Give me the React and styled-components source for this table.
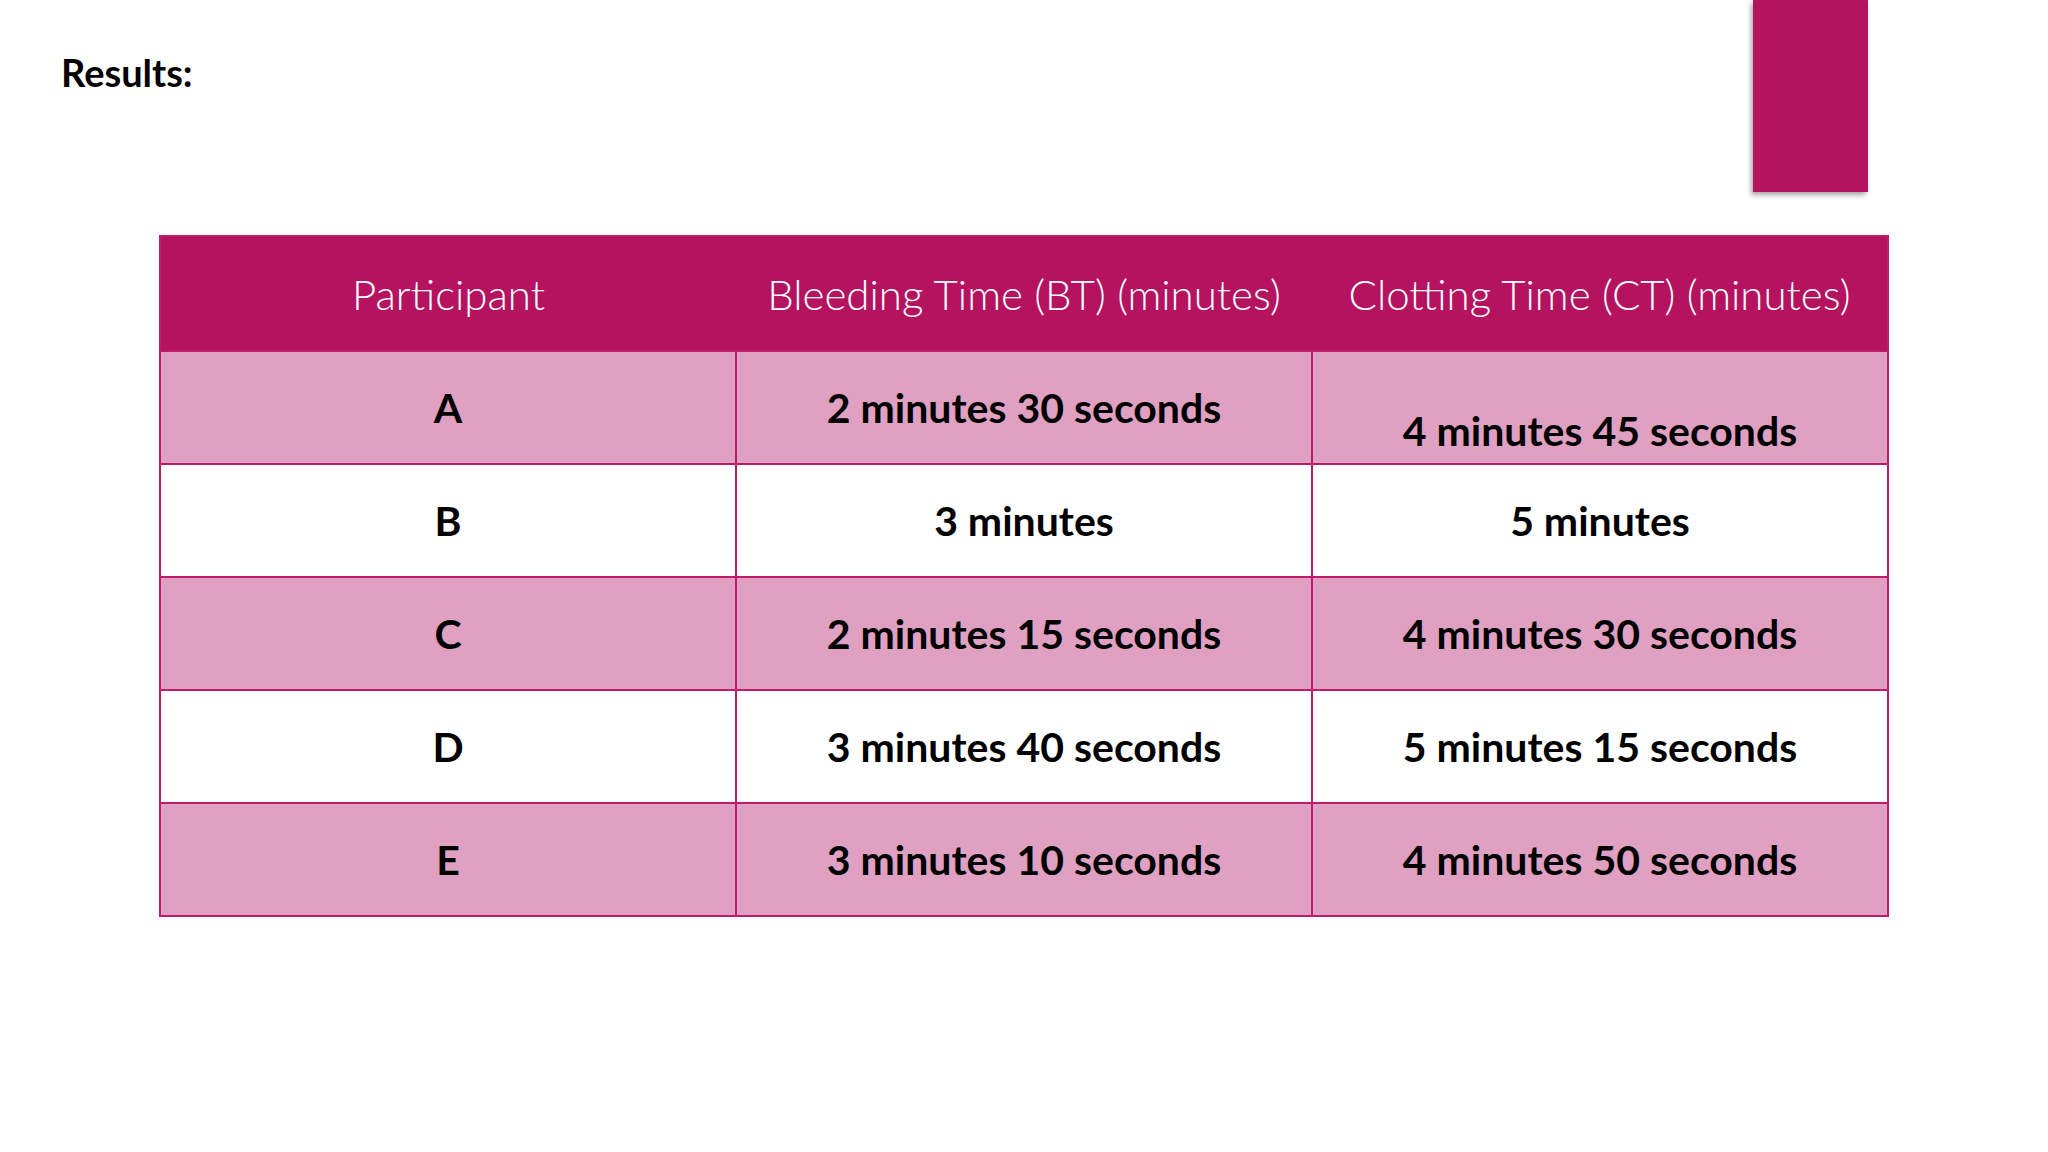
import React from "react";
import styled, { createGlobalStyle } from "styled-components";

const Global = createGlobalStyle`
  html, body { margin: 0; padding: 0; background: #ffffff; }
  body { font-family: "Lato", "Liberation Sans", sans-serif; }
`;

const Slide = styled.div`
  width: 2048px;
  height: 1152px;
  background: #ffffff;
  display: flex;
  flex-direction: column;
  overflow: hidden;
`;

const TopBar = styled.div`
  display: flex;
  justify-content: space-between;
  align-items: flex-start;
  height: 192px;
  padding: 0 180px 0 61px;
`;

const Title = styled.h1`
  margin: 51px 0 0 0;
  font-family: "Lato", "Liberation Sans", sans-serif;
  font-weight: 700;
  font-size: 38px;
  line-height: 42px;
  color: #000;
`;

const Accent = styled.div`
  width: 115px;
  height: 192px;
  background: #b3135f;
  box-shadow: -2px 3px 5px rgba(0, 0, 0, 0.35);
`;

const Table = styled.table`
  margin: 43px 0 0 159px;
  width: 1730px;
  border-collapse: collapse;
  table-layout: fixed;
  border: 2px solid #bf1a6c;
`;

const HeadCell = styled.th`
  height: 113px;
  padding: 0;
  background: #b5135f;
  color: #ffffff;
  font-family: "Lato", "Liberation Sans", sans-serif;
  font-weight: 300;
  font-size: 42px;
  text-align: center;
  vertical-align: middle;
`;

const Row = styled.tr`
  background: ${(p) => (p.$shaded ? "#dfa0c1" : "#ffffff")};
`;

const Cell = styled.td`
  height: 113px;
  box-sizing: border-box;
  padding: ${(p) => (p.$low ? "46px 0 0 0" : "0")};
  border: 2px solid #bf1a6c;
  color: #000;
  font-family: "Lato", "Liberation Sans", sans-serif;
  font-weight: 700;
  font-size: 41px;
  text-align: center;
  vertical-align: middle;
`;

const rows = [
  ["A", "2 minutes 30 seconds", "4 minutes 45 seconds"],
  ["B", "3 minutes", "5 minutes"],
  ["C", "2 minutes 15 seconds", "4 minutes 30 seconds"],
  ["D", "3 minutes 40 seconds", "5 minutes 15 seconds"],
  ["E", "3 minutes 10 seconds", "4 minutes 50 seconds"],
];

export default function App() {
  return (
    <Slide>
      <Global />
      <TopBar>
        <Title>Results:</Title>
        <Accent />
      </TopBar>
      <Table>
        <thead>
          <tr>
            <HeadCell>Participant</HeadCell>
            <HeadCell>Bleeding Time (BT) (minutes)</HeadCell>
            <HeadCell>Clotting Time (CT) (minutes)</HeadCell>
          </tr>
        </thead>
        <tbody>
          {rows.map((r, i) => (
            <Row key={r[0]} $shaded={i % 2 === 0}>
              <Cell>{r[0]}</Cell>
              <Cell>{r[1]}</Cell>
              <Cell $low={i === 0}>{r[2]}</Cell>
            </Row>
          ))}
        </tbody>
      </Table>
    </Slide>
  );
}
